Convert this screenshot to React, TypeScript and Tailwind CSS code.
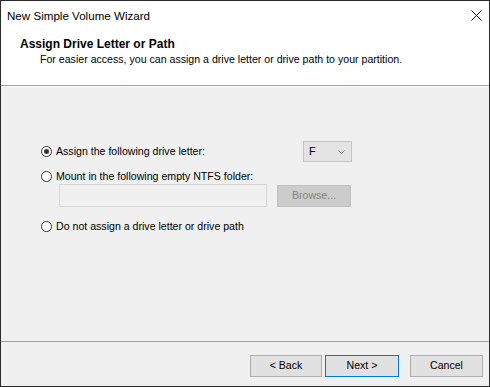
import { FC } from "react";

const Radio: FC<{ checked?: boolean; label: string }> = ({ checked, label }) => (
  <div className="flex h-[14px] items-center">
    <div className="flex h-[11px] w-[11px] items-center justify-center rounded-full border border-[#333333] bg-white">
      {checked && <div className="h-[5px] w-[5px] rounded-full bg-[#333333]" />}
    </div>
    <span className="ml-[4px] leading-none">{label}</span>
  </div>
);

const App: FC = () => {
  return (
    <div
      className="flex h-[387px] w-[490px] flex-col border border-[#2b2b2b] bg-white text-[10.6px] text-black"
      style={{ fontFamily: '"Liberation Sans", Arial, sans-serif' }}
    >
      {/* title bar */}
      <div className="flex h-[29px] items-center justify-between pl-[6px] pr-[7px]">
        <span className="text-[11.6px]">New Simple Volume Wizard</span>
        <svg width="11" height="11" viewBox="0 0 11 11" className="mt-[-1px]">
          <path d="M0.5 0.5 L10.5 10.5 M10.5 0.5 L0.5 10.5" stroke="#111" strokeWidth="1" />
        </svg>
      </div>

      {/* header */}
      <div className="h-[56px] border-b border-[#a0a0a0] pl-[19px] pt-[7px]">
        <div className="text-[12px] font-bold leading-[14px]">Assign Drive Letter or Path</div>
        <div className="mt-[1px] pl-[20px] leading-[14px]">
          For easier access, you can assign a drive letter or drive path to your partition.
        </div>
      </div>

      {/* body */}
      <div className="flex-1 border-t border-white bg-[#f0f0f0] pl-[40px]">
        <div className="mt-[54px] flex h-[21px] items-center">
          <div className="w-[262px]">
            <Radio checked label="Assign the following drive letter:" />
          </div>
          <div className="flex h-[21px] w-[49px] items-center justify-between border border-[#c4c4c4] bg-[#e4e4e4] pl-[5px] pr-[6px]">
            <span className="text-[11px]">F</span>
            <svg width="7" height="4" viewBox="0 0 7 4">
              <path d="M0.5 0.5 L3.5 3.5 L6.5 0.5" fill="none" stroke="#777" strokeWidth="1" />
            </svg>
          </div>
        </div>

        <div className="mt-[7px]">
          <Radio label="Mount in the following empty NTFS folder:" />
        </div>

        <div className="ml-[18px] mt-[1px] flex items-center">
          <div className="h-[23px] w-[208px] border border-[#d6d6d6] bg-[#f0f0f0]" />
          <div className="ml-[10px] flex h-[22px] w-[74px] items-center justify-center border border-[#bfbfbf] bg-[#cccccc] text-[#838383]">
            Browse...
          </div>
        </div>

        <div className="mt-[12px]">
          <Radio label="Do not assign a drive letter or drive path" />
        </div>
      </div>

      {/* footer */}
      <div className="flex h-[45px] justify-end border-t border-[#a0a0a0] bg-[#f0f0f0] pr-[6px] pt-[13px]">
        <div className="flex h-[22px] w-[72px] items-center justify-center border border-[#adadad] bg-[#e1e1e1]">
          &lt; Back
        </div>
        <div className="ml-[3px] flex h-[22px] w-[74px] items-center justify-center border border-[#0078d7] bg-[#e1e1e1]">
          Next &gt;
        </div>
        <div className="ml-[11px] flex h-[22px] w-[73px] items-center justify-center border border-[#adadad] bg-[#e1e1e1]">
          Cancel
        </div>
      </div>
    </div>
  );
};

export default App;
